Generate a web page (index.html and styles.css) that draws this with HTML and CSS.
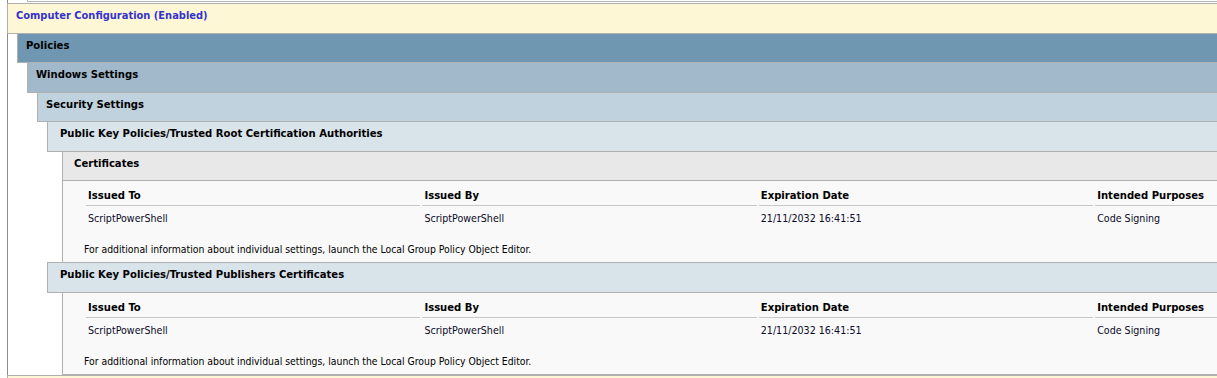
FILE: index.html
```html
<!DOCTYPE html>
<html lang="en">
<head>
<meta charset="utf-8">
<title>Group Policy Report</title>
<link rel="stylesheet" href="styles.css">
</head>
<body>
<div class="report">
  <div class="tail"></div>

  <section class="scope">
    <div class="hd h0">Computer Configuration (Enabled)</div>
    <div class="hd h1">Policies</div>
    <div class="hd h2">Windows Settings</div>
    <div class="hd h3">Security Settings</div>

    <div class="hd h4">Public Key Policies/Trusted Root Certification Authorities</div>
    <div class="hd h5">Certificates</div>
    <div class="info">
      <div class="grid">
        <div class="th">Issued To</div>
        <div class="th">Issued By</div>
        <div class="th">Expiration Date</div>
        <div class="th">Intended Purposes</div>
        <div class="td">ScriptPowerShell</div>
        <div class="td">ScriptPowerShell</div>
        <div class="td">21/11/2032 16:41:51</div>
        <div class="td">Code Signing</div>
      </div>
      <p class="note">For additional information about individual settings, launch the Local Group Policy Object Editor.</p>
    </div>

    <div class="hd h4">Public Key Policies/Trusted Publishers Certificates</div>
    <div class="info">
      <div class="grid">
        <div class="th">Issued To</div>
        <div class="th">Issued By</div>
        <div class="th">Expiration Date</div>
        <div class="th">Intended Purposes</div>
        <div class="td">ScriptPowerShell</div>
        <div class="td">ScriptPowerShell</div>
        <div class="td">21/11/2032 16:41:51</div>
        <div class="td">Code Signing</div>
      </div>
      <p class="note">For additional information about individual settings, launch the Local Group Policy Object Editor.</p>
    </div>
  </section>

  <!-- next scope header begins just below -->
  <section class="scope">
    <div class="hd h0"></div>
  </section>
</div>
</body>
</html>
```

FILE: styles.css
```css
html, body {
  margin: 0;
  padding: 0;
  background: #ffffff;
  overflow: hidden;
}

body {
  width: 1217px;
  height: 378px;
  font-family: "DejaVu Sans Condensed", "DejaVu Sans", Tahoma, sans-serif;
  font-stretch: condensed;
  font-size: 10.5px;
  color: #000000;
}

/* page frame: the grey rule down the left edge */
.report {
  width: 1500px;
  margin-left: 7px;
  border-left: 1px solid #8c8c8c;
  min-height: 400px;
}

/* bottom of the previous section, partly scrolled away */
.tail {
  height: 1px;
  margin-left: 19px;
  border-left: 1px solid #b4b4b4;
  border-bottom: 1px solid #b4b4b4;
}

.scope {
  margin-top: 1px;
}

/* section headers */
.hd {
  box-sizing: border-box;
  height: 30.5px;
  margin-bottom: -1px;
  padding: 5px 0 0 8px;
  border: 1px solid #b0b0b0;
  border-right: none;
  font-size: 11.2px;
  font-weight: bold;
  line-height: 14px;
  white-space: nowrap;
}

.h0 {
  margin-left: -1px;
  background: #fef7d6;
  color: #3333cc;
  font-size: 11px;
}

.h1 {
  margin-left: 9px;
  background: #7097b2;
}

.h2 {
  margin-left: 19px;
  background: #a2b8cb;
}

.h3 {
  margin-left: 29px;
  background: #c0d2de;
}

.h4 {
  margin-left: 39px;
  padding-left: 12px;
  background: #d9e3ea;
}

.h5 {
  margin-left: 54px;
  padding-left: 11px;
  background: #e8e8e8;
}

/* settings body under a header */
.info {
  box-sizing: border-box;
  height: 83px;
  margin-left: 54px;
  margin-bottom: -1px;
  padding: 4px 0 5px 21px;
  background: #f9f9f9;
  border: 1px solid #b0b0b0;
  border-right: none;
}

.grid {
  display: grid;
  grid-template-columns: repeat(4, 334.4px);
  column-gap: 2px;
  margin-left: 2px;
}

.th {
  height: 21px;
  padding: 1px 0 0 2px;
  box-sizing: border-box;
  border-bottom: 1px solid #c8c8c8;
  font-weight: bold;
  font-size: 11.2px;
  line-height: 20px;
}

.td {
  height: 24px;
  padding: 1px 0 0 2px;
  box-sizing: border-box;
  line-height: 23px;
  font-size: 10.6px;
  color: #0a0a28;
}

.note {
  margin: 13px 0 0 0;
  font-size: 10.35px;
  line-height: 13px;
}
```
